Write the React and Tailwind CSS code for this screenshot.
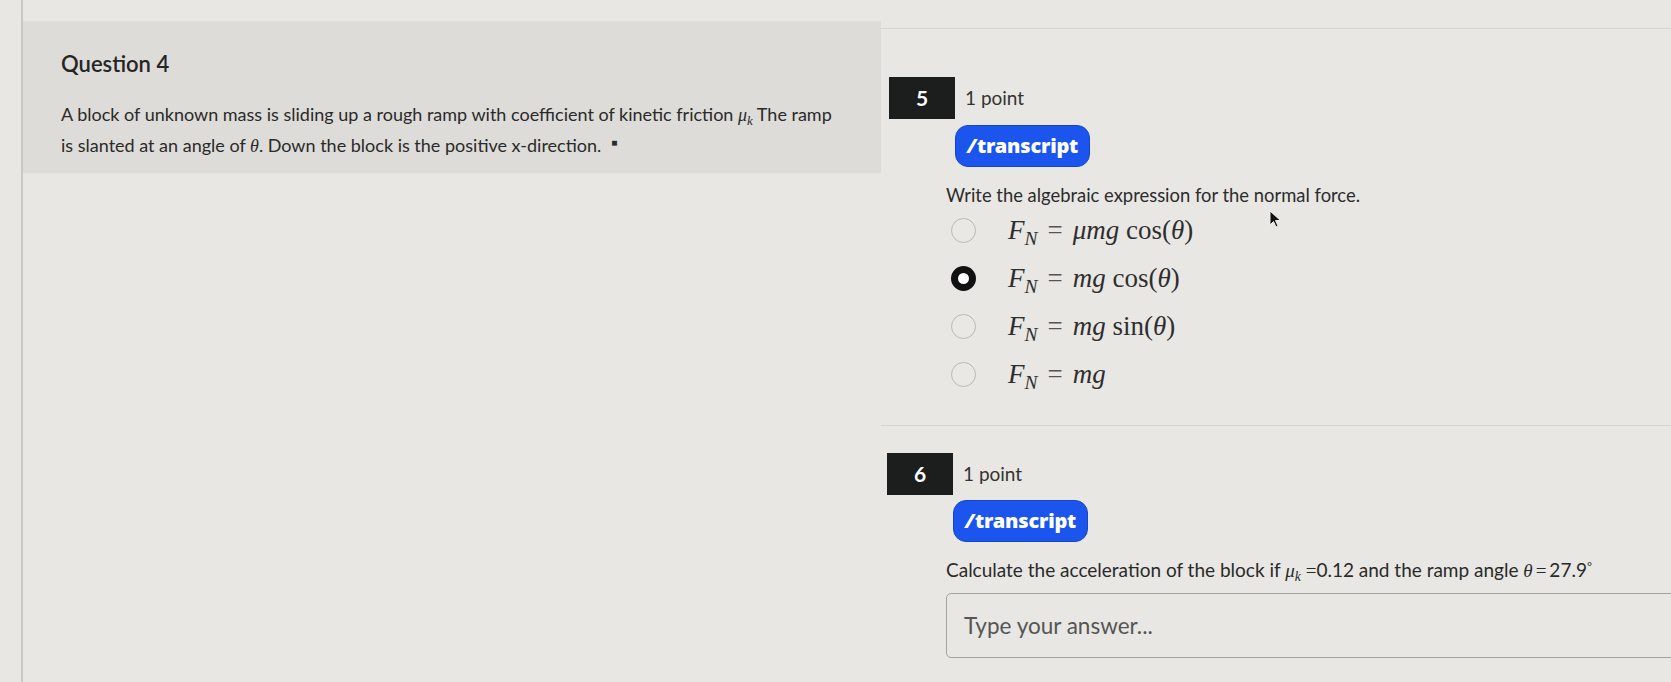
import React from "react";

const lato = { fontFamily: "Lato, 'Open Sans', sans-serif" };

function MathI({ children }) {
  return <span className="italic" style={{ fontFamily: "'Liberation Serif', 'DejaVu Serif', serif" }}>{children}</span>;
}

function Sub({ children }) {
  return (
    <span className="italic relative top-[0.3em] text-[0.72em]" style={{ fontFamily: "'Liberation Serif', serif" }}>
      {children}
    </span>
  );
}

function Formula({ rest }) {
  return (
    <span className="text-[27px] text-[#2e2e2e] whitespace-nowrap" style={{ fontFamily: "'Liberation Serif', 'DejaVu Serif', serif" }}>
      <span className="italic">F</span>
      <Sub>N</Sub>
      <span className="mx-[10px] text-[#555]">=</span>
      {rest}
    </span>
  );
}

function Radio({ checked }) {
  return checked ? (
    <span className="block w-[25px] h-[25px] rounded-full border-[7px] border-[#111] bg-white" />
  ) : (
    <span className="block w-[25px] h-[25px] rounded-full border-[1.5px] border-[#b9b9b7] bg-[#e9e8e4]" />
  );
}

function Transcript() {
  return (
    <div className="w-[135px] h-[42px] rounded-[13px] bg-[#1b55ee] border border-[#1546c9] flex items-center justify-center text-white text-[20px] font-black tracking-[-0.2px]" style={{ fontFamily: "'Noto Sans', Lato, sans-serif" }}>
      <span className="italic mr-[1px]">/</span>transcript
    </div>
  );
}

function Header({ n }) {
  return (
    <div className="flex items-center">
      <div className="w-[66px] h-[42px] bg-[#1c1d1d] flex items-center justify-center text-white text-[21px] font-bold" style={lato}>
        {n}
      </div>
      <span className="ml-[10px] text-[19px] text-[#333]" style={lato}>1 point</span>
    </div>
  );
}

export default function App() {
  const options = [
    { checked: false, rest: <><span className="italic">μmg</span> cos(<span className="italic">θ</span>)</> },
    { checked: true, rest: <><span className="italic">mg</span> cos(<span className="italic">θ</span>)</> },
    { checked: false, rest: <><span className="italic">mg</span> sin(<span className="italic">θ</span>)</> },
    { checked: false, rest: <><span className="italic">mg</span></> },
  ];

  return (
    <div className="relative w-[1671px] h-[682px] overflow-hidden bg-[#e8e7e3] flex" style={lato}>
      <div className="w-[21px] shrink-0" />
      <div className="flex-1 border-l-[2px] border-[#c9c8c4] flex items-start pt-[21px]">
        {/* Left question panel */}
        <div className="w-[858px] shrink-0 bg-[#dddcd8] pl-[38px] pt-[29px] pb-[20px] h-[152px]">
          <div className="text-[22px] font-semibold text-[#262626] leading-[28px]">Question 4</div>
          <div className="mt-[22px] text-[18px] leading-[28px] text-[#2a2a2a]">
            <div className="whitespace-nowrap">
              A block of unknown mass is sliding up a rough ramp with coefficient of kinetic friction <MathI>μ</MathI><Sub>k</Sub> The ramp
            </div>
            <div className="whitespace-nowrap">
              is slanted at an angle of <MathI>θ</MathI>. Down the block is the positive x-direction.
              <span className="ml-[10px] relative -top-[6px] text-[10px]">■</span>
            </div>
          </div>
        </div>

        {/* Right column */}
        <div className="flex-1 mt-[7px]">
          <div className="border-t border-[#d6d5d1] pl-[8px] pt-[48px] h-[397px]">
            <Header n="5" />
            <div className="ml-[57px]">
              <div className="ml-[9px] mt-[6px]"><Transcript /></div>
              <div className="mt-[17px] text-[18.4px] text-[#2c2c2c] leading-[22px]">
                Write the algebraic expression for the normal force.
              </div>
              <div className="mt-[0px] flex flex-col">
                {options.map((o, i) => (
                  <div key={i} className="h-[48px] flex items-center">
                    <div className="ml-[5px] w-[25px]"><Radio checked={o.checked} /></div>
                    <div className="ml-[32px]"><Formula rest={o.rest} /></div>
                  </div>
                ))}
              </div>
            </div>
          </div>
          <div className="border-t border-[#d6d5d1] pl-[6px] pt-[27px]">
            <Header n="6" />
            <div className="ml-[59px]">
              <div className="ml-[7px] mt-[5px]"><Transcript /></div>
              <div className="mt-[17px] text-[19px] text-[#2a2a2a] leading-[22px] whitespace-nowrap">
                Calculate the acceleration of the block if <MathI>μ</MathI><Sub>k</Sub>{" "}
                <span style={{ fontFamily: "'Liberation Serif', serif" }}>=</span>0.12 and the ramp angle <MathI>θ</MathI>
                <span className="mx-[3px]" style={{ fontFamily: "'Liberation Serif', serif" }}>=</span>27.9<sup className="text-[12px]">°</sup>
              </div>
              <div className="mt-[9px] -mr-[20px] h-[65px] border-[1.5px] border-[#a3a3a0] rounded-[5px] flex items-center pl-[17px] text-[22.5px] text-[#555]">
                Type your answer...
              </div>
            </div>
          </div>
        </div>
      </div>

      {/* mouse cursor */}
      <svg className="absolute left-[1269px] top-[210px]" width="14" height="20" viewBox="0 0 14 20">
        <path d="M1 1 L1 15 L4.5 11.5 L7 17 L9 16 L6.5 10.5 L11.5 10.5 Z" fill="#111" stroke="#eee" strokeWidth="1" />
      </svg>
    </div>
  );
}
